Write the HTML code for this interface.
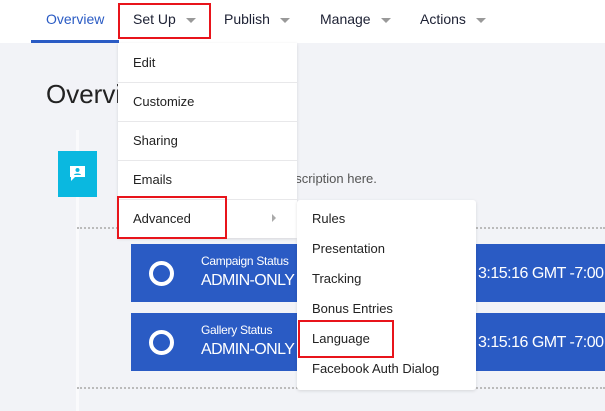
<!DOCTYPE html>
<html><head><style>
*{margin:0;padding:0;box-sizing:border-box}
body{width:605px;height:411px;overflow:hidden;background:#f2f3f7;font-family:"Liberation Sans",sans-serif;position:relative;color:#222}
.a{position:absolute;white-space:nowrap}
.nav{position:absolute;left:0;top:0;width:605px;height:43px;background:#fff}
.nav span{position:absolute;top:11px;font-size:14px;color:#1c2033}
.car{display:inline-block;width:0;height:0;border-left:5px solid transparent;border-right:5px solid transparent;border-top:5px solid #999;vertical-align:middle;margin-left:10px}
.red{position:absolute;border:2px solid #e8141b}
.menu{position:absolute;background:#fff;box-shadow:0 1px 3px rgba(0,0,0,.12)}
.mi{position:absolute;left:15px;font-size:13px;color:#222}
.sep{position:absolute;left:0;width:179px;height:1px;background:#e8e8ea}
.bar{position:absolute;left:131px;width:474px;height:58px;background:#2a5bc4;color:#fff}
.circ{position:absolute;left:18px;top:17px;width:25px;height:25px;border:4px solid #fff;border-radius:50%}
.dot{position:absolute;left:77px;width:528px;border-top:2px dotted #bbb}
.t1{left:70px;top:10px;font-size:12px;letter-spacing:-0.3px}
.t2{left:70px;top:28px;font-size:16px;letter-spacing:-0.6px}
.t3{left:347px;top:21px;font-size:16px;letter-spacing:-0.5px}
</style></head><body>
<div class="nav">
<span style="left:46px;color:#2a5bc4">Overview</span>
<span style="left:133px">Set Up<i class="car"></i></span>
<span style="left:224px">Publish<i class="car"></i></span>
<span style="left:320px">Manage<i class="car"></i></span>
<span style="left:420px">Actions<i class="car"></i></span>
<div class="a" style="left:31px;top:40px;width:88px;height:3px;background:#2a5bc4"></div>
</div>
<div class="red" style="left:118px;top:3px;width:93px;height:36px"></div>
<div class="a" style="left:46px;top:79px;font-size:26px;font-weight:300;color:#222">Overview</div>
<div class="a" style="left:76px;top:130px;width:3px;height:281px;background:#fafafc"></div>
<div class="a" style="left:58px;top:151px;width:39px;height:46px;background:#0ab8e0"></div>
<svg class="a" style="left:69px;top:165px" width="17" height="17" viewBox="0 0 17 17"><path d="M1 1h15v11H6l-4 4v-4H1z" fill="#fff"/><circle cx="8.5" cy="5" r="2" fill="#0ab8e0"/><path d="M5 10c0-2 7-2 7 0z" fill="#0ab8e0"/></svg>
<div class="a" style="left:288px;top:171px;font-size:13px;color:#555">escription here.</div>
<div class="dot" style="top:227px"></div>
<div class="dot" style="top:387px"></div>
<div class="bar" style="top:244px"><div class="circ"></div><div class="a t1">Campaign Status</div><div class="a t2">ADMIN-ONLY</div><div class="a t3">3:15:16 GMT -7:00</div></div>
<div class="bar" style="top:313px"><div class="circ"></div><div class="a t1">Gallery Status</div><div class="a t2">ADMIN-ONLY</div><div class="a t3">3:15:16 GMT -7:00</div></div>
<div class="menu" style="left:118px;top:43px;width:179px;height:195px">
<div class="mi" style="top:12px">Edit</div><div class="sep" style="top:39px"></div>
<div class="mi" style="top:51px">Customize</div><div class="sep" style="top:78px"></div>
<div class="mi" style="top:90px">Sharing</div><div class="sep" style="top:117px"></div>
<div class="mi" style="top:129px">Emails</div><div class="sep" style="top:156px"></div>
<div class="mi" style="top:168px">Advanced</div>
<div class="a" style="left:154px;top:171px;border-top:4px solid transparent;border-bottom:4px solid transparent;border-left:4px solid #aaa"></div>
</div>
<div class="red" style="left:117px;top:196px;width:110px;height:43px"></div>
<div class="menu" style="left:297px;top:200px;width:179px;height:190px;border-radius:3px">
<div class="mi" style="top:11px">Rules</div>
<div class="mi" style="top:41px">Presentation</div>
<div class="mi" style="top:71px">Tracking</div>
<div class="mi" style="top:101px">Bonus Entries</div>
<div class="mi" style="top:131px">Language</div>
<div class="mi" style="top:161px">Facebook Auth Dialog</div>
</div>
<div class="red" style="left:298px;top:320px;width:96px;height:38px"></div>
</body></html>
